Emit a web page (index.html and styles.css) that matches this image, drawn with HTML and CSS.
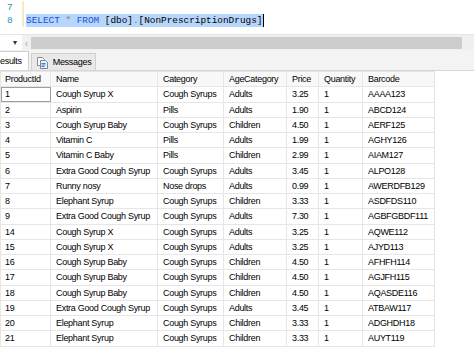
FILE: index.html
```html
<!DOCTYPE html>
<html lang="en">
<head>
    <meta charset="UTF-8">
    <title>NonPrescriptionDrugs - Query</title>
    <link rel="stylesheet" href="styles.css">
</head>
<body>
    <div class="editor">
        <div class="line"><span class="num">7</span><span class="code"></span></div>
        <div class="line"><span class="num">8</span><span class="code"><span class="sel"><span class="kw">SELECT</span> <span class="op">*</span> <span class="kw">FROM</span> [dbo]<span class="op">.</span>[NonPrescriptionDrugs]</span><span class="caret"></span></span></div>
    </div>

    <div class="hscroll">
        <span class="zoom">&#9662;</span>
        <span class="arrow">&lsaquo;</span>
        <div class="thumb"></div>
    </div>

    <div class="tabs">
        <div class="tab active">esults</div>
        <div class="tab">
            <svg width="12" height="13" viewBox="0 0 12 13">
                <path d="M1.5 1.5h5l2 2v6h-7z" fill="#fff" stroke="#8a8a8a"/>
                <path d="M4.5 4.5h5l2 2v6h-7z" fill="#eef3fb" stroke="#6f86a8"/>
                <path d="M5.5 7.5h4M5.5 9h4M5.5 10.5h3" stroke="#4a78c2"/>
            </svg>
            Messages
        </div>
    </div>

    <table class="grid">
        <colgroup>
            <col style="width:50px"><col style="width:107px"><col style="width:66px"><col style="width:63px">
            <col style="width:32px"><col style="width:44px"><col style="width:72px">
        </colgroup>
        <thead>
            <tr><th>ProductId</th><th>Name</th><th>Category</th><th>AgeCategory</th><th>Price</th><th>Quantity</th><th>Barcode</th></tr>
        </thead>
        <tbody>
            <tr><td class="focus">1</td><td>Cough Syrup X</td><td>Cough Syrups</td><td>Adults</td><td>3.25</td><td>1</td><td>AAAA123</td></tr>
            <tr><td>2</td><td>Aspirin</td><td>Pills</td><td>Adults</td><td>1.90</td><td>1</td><td>ABCD124</td></tr>
            <tr><td>3</td><td>Cough Syrup Baby</td><td>Cough Syrups</td><td>Children</td><td>4.50</td><td>1</td><td>AERF125</td></tr>
            <tr><td>4</td><td>Vitamin C</td><td>Pills</td><td>Adults</td><td>1.99</td><td>1</td><td>AGHY126</td></tr>
            <tr><td>5</td><td>Vitamin C Baby</td><td>Pills</td><td>Children</td><td>2.99</td><td>1</td><td>AIAM127</td></tr>
            <tr><td>6</td><td>Extra Good Cough Syrup</td><td>Cough Syrups</td><td>Adults</td><td>3.45</td><td>1</td><td>ALPO128</td></tr>
            <tr><td>7</td><td>Runny nosy</td><td>Nose drops</td><td>Adults</td><td>0.99</td><td>1</td><td>AWERDFB129</td></tr>
            <tr><td>8</td><td>Elephant Syrup</td><td>Cough Syrups</td><td>Children</td><td>3.33</td><td>1</td><td>ASDFDS110</td></tr>
            <tr><td>9</td><td>Extra Good Cough Syrup</td><td>Cough Syrups</td><td>Adults</td><td>7.30</td><td>1</td><td>AGBFGBDF111</td></tr>
            <tr><td>14</td><td>Cough Syrup X</td><td>Cough Syrups</td><td>Adults</td><td>3.25</td><td>1</td><td>AQWE112</td></tr>
            <tr><td>15</td><td>Cough Syrup X</td><td>Cough Syrups</td><td>Adults</td><td>3.25</td><td>1</td><td>AJYD113</td></tr>
            <tr><td>16</td><td>Cough Syrup Baby</td><td>Cough Syrups</td><td>Children</td><td>4.50</td><td>1</td><td>AFHFH114</td></tr>
            <tr><td>17</td><td>Cough Syrup Baby</td><td>Cough Syrups</td><td>Children</td><td>4.50</td><td>1</td><td>AGJFH115</td></tr>
            <tr><td>18</td><td>Cough Syrup Baby</td><td>Cough Syrups</td><td>Children</td><td>4.50</td><td>1</td><td>AQASDE116</td></tr>
            <tr><td>19</td><td>Extra Good Cough Syrup</td><td>Cough Syrups</td><td>Adults</td><td>3.45</td><td>1</td><td>ATBAW117</td></tr>
            <tr><td>20</td><td>Elephant Syrup</td><td>Cough Syrups</td><td>Children</td><td>3.33</td><td>1</td><td>ADGHDH18</td></tr>
            <tr><td>21</td><td>Elephant Syrup</td><td>Cough Syrups</td><td>Children</td><td>3.33</td><td>1</td><td>AUYT119</td></tr>
        </tbody>
    </table>
</body>
</html>
```

FILE: styles.css
```css
body {
    margin: 0;
    background: #fff;
    font-family: 'Liberation Sans', Arial, sans-serif;
    color: #000;
    overflow: hidden;
}

/* query editor */
.editor {
    height: 34px;
    padding-top: 1px;
    box-sizing: border-box;
    background: #fff;
}
.line {
    display: flex;
    height: 13px;
    line-height: 13px;
    font-family: 'Liberation Mono', 'DejaVu Sans Mono', monospace;
    font-size: 9.4px;
}
.num {
    width: 24px;
    padding-left: 7px;
    box-sizing: border-box;
    color: #2b91af;
    border-right: 2px solid #f1edc6;
}
.code {
    padding-left: 2px;
    display: flex;
    white-space: pre;
}
.sel {
    background: #b7d6fb;
    padding-right: 1px;
}
.kw {
    color: #2050d8;
}
.op {
    color: #808080;
}
.caret {
    width: 1px;
    background: #000;
}

/* scroll bar row */
.hscroll {
    display: flex;
    align-items: center;
    height: 16px;
    background: #f0f0f0;
    border-top: 1px solid #e4e4e4;
    box-sizing: border-box;
}
.zoom {
    width: 22px;
    height: 100%;
    background: #fff;
    font-size: 8px;
    color: #333;
    text-align: right;
    padding-right: 5px;
    box-sizing: border-box;
    line-height: 15px;
}
.arrow {
    width: 9px;
    color: #b0b0b0;
    font-size: 11px;
    text-align: center;
}
.thumb {
    width: 431px;
    height: 12px;
    background: #cdcdcd;
}

/* result tabs */
.tabs {
    display: flex;
    align-items: flex-end;
    height: 21px;
    background: #f3f3f3;
    border-bottom: 1px solid #d6d6d6;
    box-sizing: border-box;
    font-size: 9px;
    letter-spacing: -0.3px;
}
.tab {
    display: flex;
    align-items: center;
    gap: 5px;
    height: 17px;
    padding: 0 4px;
    margin-right: 2px;
    background: #e9e9e9;
    border: 1px solid #cfcfcf;
    border-bottom: none;
    box-sizing: border-box;
}
.tab.active {
    background: #fff;
    height: 19px;
    padding: 0 6px 0 0;
    border-left: none;
}

/* results grid */
.grid {
    border-collapse: collapse;
    table-layout: fixed;
    width: 434px;
    font-size: 9px;
    letter-spacing: -0.3px;
}
.grid th,
.grid td {
    height: 15.25px;
    padding: 0 0 0 5px;
    border: 1px solid #e6e6e6;
    text-align: left;
    font-weight: normal;
    white-space: nowrap;
    overflow: hidden;
    box-sizing: border-box;
}
.grid th {
    background: #f8f8f8;
}
.grid td:first-child,
.grid th:first-child {
    padding-left: 4px;
}
.grid td.focus {
    outline: 1px solid #9d9d9d;
    outline-offset: -1px;
}
```
